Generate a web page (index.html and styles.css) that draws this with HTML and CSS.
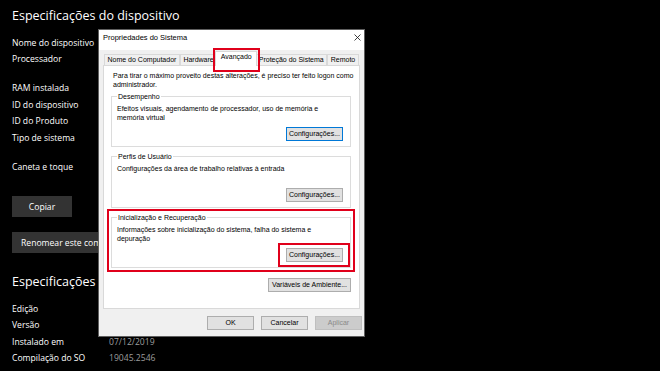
FILE: index.html
```
<!DOCTYPE html>
<html lang="pt-BR">
<head>
    <meta charset="UTF-8">
    <meta name="viewport" content="width=device-width, initial-scale=1.0">
    <title>Propriedades do Sistema</title>
    <link rel="stylesheet" href="styles.css">
</head>
<body>
    <div class="configuracoes">
        <h2 class="titulo">Especificações do dispositivo</h2>
        <div class="especificacoes">
            <div class="linha"><span class="rotulo">Nome do dispositivo</span></div>
            <div class="linha linha-dupla"><span class="rotulo">Processador</span></div>
            <div class="linha"><span class="rotulo">RAM instalada</span></div>
            <div class="linha"><span class="rotulo">ID do dispositivo</span></div>
            <div class="linha"><span class="rotulo">ID do Produto</span></div>
            <div class="linha linha-dupla"><span class="rotulo">Tipo de sistema</span></div>
            <div class="linha"><span class="rotulo">Caneta e toque</span></div>
        </div>
        <div class="acoes">
            <button class="botao-escuro">Copiar</button>
            <button class="botao-escuro">Renomear este computador</button>
        </div>
        <h2 class="titulo">Especificações do Windows</h2>
        <div class="especificacoes">
            <div class="linha"><span class="rotulo">Edição</span></div>
            <div class="linha"><span class="rotulo">Versão</span></div>
            <div class="linha"><span class="rotulo">Instalado em</span><span class="valor">07/12/2019</span></div>
            <div class="linha"><span class="rotulo">Compilação do SO</span><span class="valor">19045.2546</span></div>
        </div>
    </div>

    <!-- Janela de diálogo sobre a página de configurações -->
    <div class="janela">
        <div class="barra-titulo">
            <span>Propriedades do Sistema</span>
            <svg class="fechar" width="7" height="7" viewBox="0 0 7 7">
                <path d="M0.5 0.5L6.5 6.5M6.5 0.5L0.5 6.5" stroke="#111" stroke-width="0.8"/>
            </svg>
        </div>
        <div class="abas">
            <div class="aba">Nome do Computador</div>
            <div class="aba">Hardware</div>
            <div class="aba aba-ativa destaque">Avançado</div>
            <div class="aba">Proteção do Sistema</div>
            <div class="aba">Remoto</div>
        </div>
        <div class="painel">
            <p class="aviso">Para tirar o máximo proveito destas alterações, é preciso ter feito logon como administrador.</p>

            <fieldset class="grupo">
                <legend>Desempenho</legend>
                <p>Efeitos visuais, agendamento de processador, uso de memória e memória virtual</p>
                <div class="grupo-botoes"><button class="botao botao-config botao-foco">Configurações...</button></div>
            </fieldset>

            <fieldset class="grupo">
                <legend>Perfis de Usuário</legend>
                <p>Configurações da área de trabalho relativas à entrada</p>
                <div class="grupo-botoes"><button class="botao botao-config">Configurações...</button></div>
            </fieldset>

            <fieldset class="grupo grupo-destaque">
                <legend>Inicialização e Recuperação</legend>
                <p>Informações sobre inicialização do sistema, falha do sistema e depuração</p>
                <div class="grupo-botoes"><button class="botao botao-config destaque">Configurações...</button></div>
            </fieldset>

            <div class="ambiente"><button class="botao botao-ambiente">Variáveis de Ambiente...</button></div>
        </div>
        <div class="rodape">
            <button class="botao botao-rodape">OK</button>
            <button class="botao botao-rodape">Cancelar</button>
            <button class="botao botao-rodape" disabled>Aplicar</button>
        </div>
    </div>
</body>
</html>
```
FILE: styles.css
```
body {
    margin: 0;
    padding: 0;
    height: 371px;
    overflow: hidden;
    background-color: #000;
    color: #FFF;
    font-family: "Open Sans", "Noto Sans", sans-serif;
}

.configuracoes {
    padding: 6.6px 12px 0;
}

.titulo {
    margin: 0;
    font-size: 12.5px;
    font-weight: normal;
    line-height: 17px;
}

.especificacoes {
    margin: 13px 0 0 0;
}

.linha {
    display: flex;
    font-size: 8.6px;
    line-height: 12.5px;
    padding-bottom: 4px;
}

/* o valor ocupa duas linhas na coluna da direita */
.linha-dupla {
    padding-bottom: 16.5px;
}

.rotulo {
    width: 97px;
    flex-shrink: 0;
    white-space: nowrap;
}

.valor {
    color: #9D9D9D;
}

.acoes {
    display: flex;
    flex-direction: column;
    align-items: flex-start;
    gap: 15px;
    margin: 19px 0 19.5px 0;
}

.botao-escuro {
    height: 21px;
    min-width: 60px;
    padding: 0 9px;
    border: 0;
    background-color: #333;
    color: #FFF;
    font-family: "Open Sans", "Noto Sans", sans-serif;
    font-size: 8.6px;
    white-space: nowrap;
}

/* Janela "Propriedades do Sistema" */
.janela {
    position: absolute;
    left: 98px;
    top: 29px;
    width: 267px;
    height: 308px;
    box-sizing: border-box;
    border: 1px solid #5F5F5F;
    background-color: #F0F0F0;
    color: #000;
    font-family: "Liberation Sans", Arial, sans-serif;
    font-size: 7px;
    line-height: 9px;
}

.barra-titulo {
    display: flex;
    justify-content: space-between;
    align-items: flex-start;
    height: 20px;
    box-sizing: border-box;
    padding: 3px 3px 0 4px;
    background-color: #FFF;
    font-size: 7.5px;
    line-height: 10px;
}

.fechar {
    margin-top: 1px;
}

.abas {
    display: flex;
    align-items: flex-end;
    height: 14px;
    margin: 1px 0 0 5px;
}

.aba {
    height: 11px;
    box-sizing: border-box;
    padding: 0 2.5px;
    border: 1px solid #D9D9D9;
    border-bottom: 0;
    background-color: #F0F0F0;
    line-height: 10px;
    white-space: nowrap;
}

.aba-ativa {
    position: relative;
    z-index: 1;
    height: 15px;
    margin: 0 -2px -1px;
    padding: 0 4.5px;
    background-color: #FFF;
}

.destaque::after {
    content: "";
    position: absolute;
    border: 2px solid #E0001B;
    pointer-events: none;
}

.aba-ativa.destaque::after {
    inset: -4px -4px -6px -3px;
}

.painel {
    height: 244px;
    box-sizing: border-box;
    margin: 0 4px;
    padding: 5px 8px 0 7px;
    border: 1px solid #D9D9D9;
    background-color: #FFF;
}

.aviso {
    margin: 0 -6px 0 2px;
}

.grupo {
    margin: 5px 0 0 0;
    padding: 3px 7px 5px 5px;
    min-inline-size: 0;
    border: 1px solid #DCDCDC;
}

.grupo:first-of-type {
    margin-top: 2.5px;
}

.grupo legend {
    padding: 0 1px;
    line-height: 9px;
}

.grupo p {
    margin: 0;
    min-height: 18px;
}

.grupo-destaque {
    outline: 2px solid #E0001B;
    outline-offset: 2px;
}

.grupo-botoes {
    margin-top: 5.5px;
    text-align: right;
}

.botao {
    height: 14px;
    box-sizing: border-box;
    padding: 0 3px;
    border: 1px solid #ADADAD;
    background-color: #E1E1E1;
    color: #000;
    font-family: "Liberation Sans", Arial, sans-serif;
    font-size: 7px;
    line-height: 12px;
    white-space: nowrap;
}

.botao-config {
    width: 57px;
    padding: 0;
}

.botao-foco {
    border-color: #0078D7;
}

.botao.destaque {
    position: relative;
}

.botao.destaque::after {
    inset: -6px -8px -6px -9px;
}

.ambiente {
    margin: 10px 0 0 0;
    text-align: right;
}

.botao-ambiente {
    width: 83px;
}

.rodape {
    display: flex;
    justify-content: flex-end;
    gap: 7px;
    margin: 7px 2px 0 0;
}

.botao-rodape {
    width: 47px;
}

.botao:disabled {
    border-color: #BFBFBF;
    background-color: #CCC;
    color: #8A8A8A;
}
```
